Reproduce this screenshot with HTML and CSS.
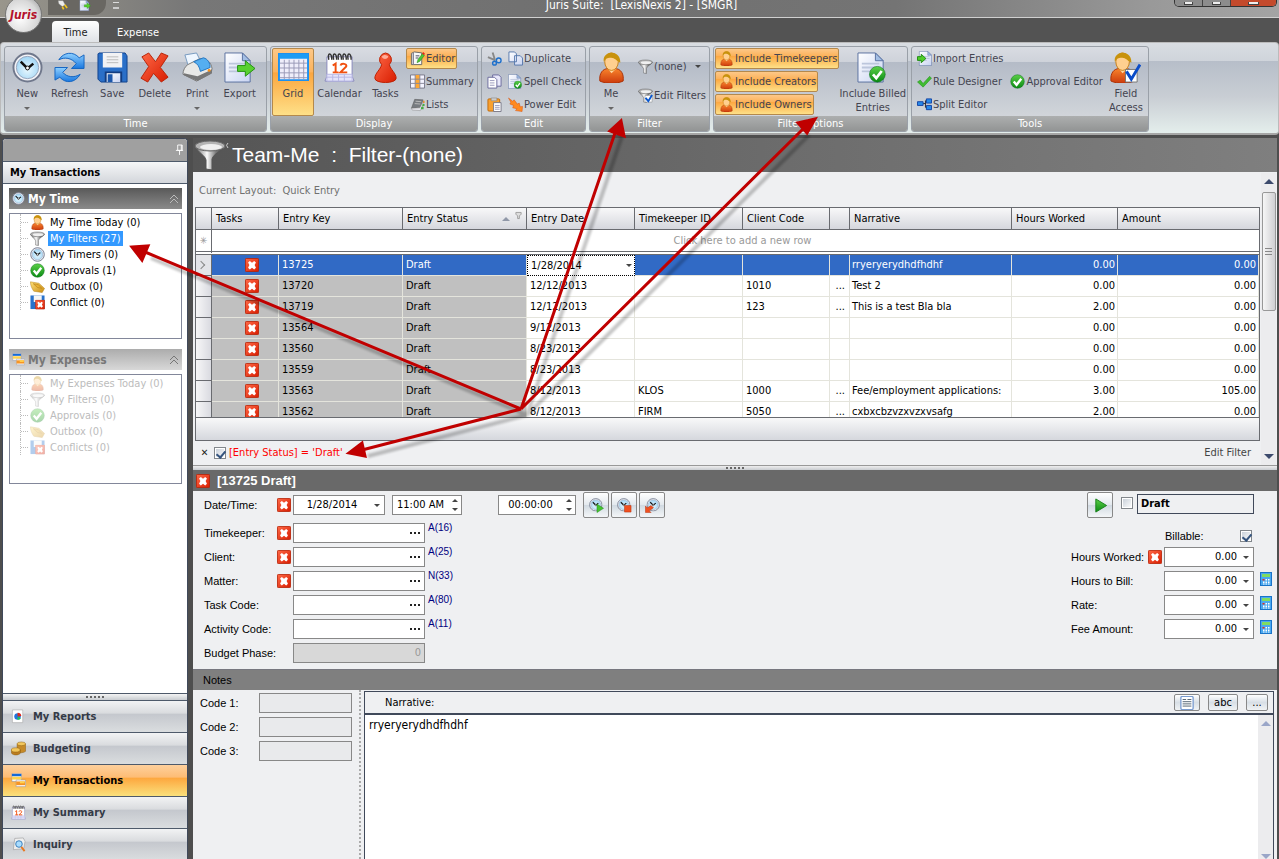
FILE: index.html
```html
<!DOCTYPE html>
<html lang="en">
<head>
<meta charset="utf-8">
<title>Juris Suite</title>
<link rel="stylesheet" href="styles.css">
</head>
<body>
<svg class="defs" aria-hidden="true">
<defs>
<linearGradient id="gOr" x1="0" y1="0" x2="0" y2="1"><stop offset="0" stop-color="#f8842c"/><stop offset="1" stop-color="#cc3a0c"/></linearGradient>
<linearGradient id="gRed" x1="0" y1="0" x2="1" y2="1"><stop offset="0" stop-color="#ff6a48"/><stop offset="1" stop-color="#d81c00"/></linearGradient>
<linearGradient id="gBlue" x1="0" y1="0" x2="0" y2="1"><stop offset="0" stop-color="#8fd0ff"/><stop offset="1" stop-color="#1a78e0"/></linearGradient>
<linearGradient id="gGreen" x1="0" y1="0" x2="0" y2="1"><stop offset="0" stop-color="#5cd048"/><stop offset="1" stop-color="#0a8a14"/></linearGradient>
<linearGradient id="gGold" x1="0" y1="0" x2="1" y2="1"><stop offset="0" stop-color="#ffe27a"/><stop offset="1" stop-color="#c98a10"/></linearGradient>
<linearGradient id="gMetal" x1="0" y1="0" x2="1" y2="0"><stop offset="0" stop-color="#666"/><stop offset=".4" stop-color="#fafafa"/><stop offset=".7" stop-color="#777"/><stop offset="1" stop-color="#333"/></linearGradient>
<linearGradient id="gDoc" x1="0" y1="0" x2="1" y2="1"><stop offset="0" stop-color="#fff"/><stop offset="1" stop-color="#c9d4f2"/></linearGradient>
<radialGradient id="gFace" cx=".5" cy=".6" r=".6"><stop offset="0" stop-color="#e8f8ff"/><stop offset="1" stop-color="#9ed4f4"/></radialGradient>
</defs>
<symbol id="clock" viewBox="0 0 32 32"><circle cx="16" cy="16" r="14.5" fill="#f4f4f8" stroke="#70788c" stroke-width="2"/><circle cx="16" cy="16" r="11.5" fill="url(#gFace)" stroke="#9aa6bc"/><path d="M9 10l7 7 6-5" fill="none" stroke="#111" stroke-width="2.6"/><circle cx="16" cy="16.5" r="2" fill="#fff" stroke="#111"/></symbol>
<symbol id="refresh" viewBox="0 0 32 32"><path d="M5 8C10 0 20-1 26 6l5-3v14H18l5-5C18 6 11 5 5 8z" fill="url(#gBlue)" stroke="#1464c0"/><path d="M27 23c-5 9-15 10-21 3l-5 3V16h13l-5 5c4 5 12 6 18 2z" fill="url(#gBlue)" stroke="#1464c0"/></symbol>
<symbol id="save" viewBox="0 0 32 32"><path d="M2 1h27l2 3v27H4l-3-3V2z" fill="#2a6fc8" stroke="#12428c"/><path d="M6 1h20v15H6z" fill="#f2f2f4"/><path d="M10 5h12M10 8h12M10 11h12" stroke="#bbb"/><path d="M8 20h18v11H8z" fill="#123c80"/><path d="M10 22h14v9H10z" fill="url(#gDoc)"/><path d="M11 23h5v8h-5z" fill="#1b57ac"/></symbol>
<symbol id="delete" viewBox="0 0 32 32"><path d="M3 5l7-4 7 9 6-9 7 3-8 12 8 10-7 5-8-9-6 9-7-4 8-12z" fill="url(#gRed)" stroke="#b82408"/></symbol>
<symbol id="print" viewBox="0 0 32 32"><path d="M3 3l12-2 5 10-13 5z" fill="#eef6ff" stroke="#779ac0"/><path d="M6 13l12-6c8-1 12 4 13 10l-1 5-15 8L1 23c0-4 2-8 5-10z" fill="#e8e8e6" stroke="#777"/><path d="M2 22l14 3 15-7v4l-15 8-14-6z" fill="#777"/><path d="M12 10l10-4c5 1 7 6 7 10l-10 4c-1-5-3-8-7-10z" fill="#55aef0" stroke="#2576c0"/><circle cx="28" cy="19" r="1.5" fill="#fc9012"/></symbol>
<symbol id="doc" viewBox="0 0 32 32"><path d="M3 1h18l8 8v22H3z" fill="url(#gDoc)" stroke="#5a72a0"/><path d="M21 1v8h8z" fill="#a3bee4" stroke="#5a72a0"/><path d="M7 12h18M7 16h18M7 20h12" stroke="#bcc6dc" stroke-width="2"/></symbol>
<symbol id="export" viewBox="0 0 32 32"><use href="#doc" x="-2"/><path d="M14 14h8V9l10 8-10 8v-5h-8z" fill="#58d030" stroke="#239012"/></symbol>
<symbol id="import" viewBox="0 0 32 32"><use href="#doc" x="2"/><path d="M1 12h8V7l10 9-10 9v-5H1z" fill="#50cc2a" stroke="#1d8a10" stroke-width="2"/></symbol>
<symbol id="grid" viewBox="0 0 32 32"><path d="M1 2h30v27H1z" fill="#efeefa" stroke="#1e90ee" stroke-width="2"/><path d="M1 2h30v5H1z" fill="#1e9cf4"/><path d="M2 11.500h28M2 16.500h28M2 21.500h28M2 26.500h28M6.500 8v20M11.500 8v20M16.500 8v20M21.500 8v20M26.500 8v20" stroke="#9a9ab8"/></symbol>
<symbol id="calendar" viewBox="0 0 32 32"><path d="M3 5h26v20l2 5H1l2-5z" fill="#fff" stroke="#8888bc"/><path d="M3 23h26v7H3zM9 23v7M15 23v7M21 23v7M3 26h26" fill="#e4e4fa" stroke="#b8b8e4"/><path d="M5 8c-2-8 3-8 3 0M10 8c-2-8 3-8 3 0M15 8c-2-8 3-8 3 0M20 8c-2-8 3-8 3 0M25 8c-2-8 3-8 3 0" fill="none" stroke="#333" stroke-width="1.500"/><path d="M9 14l3-2v9M9 21h6M17 14c1-3 7-2 6 1l-6 6h7" fill="none" stroke="#f05010" stroke-width="2"/></symbol>
<symbol id="pawn" viewBox="0 0 32 32"><path d="M16 1a7 7 0 014 12c1 5 7 9 7 14 0 6-22 6-22 0 0-5 6-9 7-14A7 7 0 0116 1z" fill="url(#gRed)" stroke="#bc2000"/><path d="M12 5c2-3 6-2 7 0-2 3-5 3-7 0z" fill="#ffac98"/></symbol>
<symbol id="person" viewBox="0 0 32 32"><path d="M4 30c-1-8 3-13 9-13h6c7 0 10 6 9 13-6 3-18 3-24 0z" fill="url(#gOr)" stroke="#aa3206"/><path d="M12 17l4 5 5-5v-3h-9z" fill="#ffd8a0"/><ellipse cx="16" cy="10" rx="7" ry="9" fill="#ffcf8f" stroke="#c88018"/><path d="M8 10C6-2 26-3 25 11 21 9 19 5 14 6c-2 0-4 1-6 4z" fill="#c8920c"/></symbol>
<symbol id="personCheck" viewBox="0 0 32 32"><use href="#person" x="-3"/><path d="M16 18h12v13H16z" fill="#fff" stroke="#777"/><path d="M17 20l5 8 9-15" fill="none" stroke="#0a4cc8" stroke-width="3"/></symbol>
<symbol id="ok" viewBox="0 0 32 32"><circle cx="16" cy="16" r="14.500" fill="url(#gGreen)" stroke="#077018"/><path d="M8 16l6 7 10-13" fill="none" stroke="#fff" stroke-width="5"/></symbol>
<symbol id="docOk" viewBox="0 0 32 32"><use href="#doc" x="-2"/><use href="#ok" x="12" y="14" width="18" height="18"/></symbol>
<symbol id="edit" viewBox="0 0 32 32"><path d="M3 5l6-3 16 2v25H3z" fill="#f8f8f8" stroke="#666" stroke-width="2"/><path d="M7 4v25M12 10h8M12 15h6" stroke="#889" stroke-width="3"/><path d="M15 25l2-7L27 5l4 4-10 13z" fill="#4cc634" stroke="#228018"/><path d="M26 5l2-3 4 4-3 3z" fill="#e82818"/></symbol>
<symbol id="plug" viewBox="0 0 32 32"><path d="M2 2h14l6 12-8 5L4 11z" fill="#eee" stroke="#999"/><path d="M14 19l4 8M21 14l7 9" stroke="#f2c41c" stroke-width="5"/></symbol>
<symbol id="summary" viewBox="0 0 32 32"><path d="M1 2h30v28H1z" fill="#f4f4ff" stroke="#778" stroke-width="2"/><path d="M11 2h10v28H11z" fill="#ffa834"/><path d="M1 11h30M1 20h30M11 2v28M21 2v28" stroke="#889" stroke-width="2"/></symbol>
<symbol id="lists" viewBox="0 0 32 32"><path d="M10 5l18 1-6 17-19 1z" fill="#777b80" stroke="#555"/><path d="M12 9l12 1M10 14l12 1" stroke="#bbb" stroke-width="2"/><path d="M3 24l18-1 7-13v8l-6 11-17-1z" fill="#e4e4ea" stroke="#888"/><path d="M28 8h3v5h-3z" fill="#e88a20"/><path d="M27 15h4v4h-5zM24 21h5v5h-6z" fill="#4a4"/></symbol>
<symbol id="cut" viewBox="0 0 32 32"><path d="M12 3l5 16M2 13l16 7" stroke="#888" stroke-width="4"/><circle cx="16" cy="26" r="4" fill="none" stroke="#1e70cc" stroke-width="3"/><circle cx="25" cy="20" r="5" fill="none" stroke="#1e70cc" stroke-width="3"/></symbol>
<symbol id="copy" viewBox="0 0 32 32"><path d="M12 2h13l5 5v19H12z" fill="#e8e8fa" stroke="#6a6a9c" stroke-width="2"/><path d="M2 7h14l5 5v18H2z" fill="#fff" stroke="#6a6a9c" stroke-width="2"/><path d="M6 14h10M6 19h10M6 24h10" stroke="#99b" stroke-width="2"/></symbol>
<symbol id="dup" viewBox="0 0 32 32"><path d="M2 2h12l4 4v17H2zM14 10h12l5 5v15H14z" fill="url(#gDoc)" stroke="#5678ac" stroke-width="2"/></symbol>
<symbol id="paste" viewBox="0 0 32 32"><rect x="2" y="4" width="25" height="26" rx="2" fill="#f8a030" stroke="#c06a08" stroke-width="2"/><path d="M9 2h12v6H9z" fill="#ccc" stroke="#777"/><path d="M14 12h16v19H14z" fill="#fff" stroke="#778" stroke-width="2"/><path d="M17 18h10M17 22h10M17 26h10" stroke="#99b" stroke-width="2"/></symbol>
<symbol id="bolt" viewBox="0 0 32 32"><path d="M1 2l9 7 3-3 7 9 4-2 2 8 5-1-1 11-14-2 3-4-9-2 2-5-8-3 2-4z" fill="#ff8a20" stroke="#d84a08"/></symbol>
<symbol id="funnel" viewBox="0 0 32 32"><path d="M1 7c3 7 10 9 11 14v9l6 1V20c2-6 9-7 13-13z" fill="url(#gMetal)" stroke="#555"/><ellipse cx="16" cy="7" rx="15" ry="5" fill="#b4b4b4" stroke="#666"/><ellipse cx="17" cy="8" rx="11" ry="3" fill="#f0f0f0"/></symbol>
<symbol id="funnelCheck" viewBox="0 0 32 32"><use href="#funnel"/><path d="M15 16h15v14H15z" fill="#fff" stroke="#888"/><path d="M16 21l6 7 8-13" fill="none" stroke="#0a58d0" stroke-width="4"/></symbol>
<symbol id="tick" viewBox="0 0 32 32"><path d="M1 17l6-4 6 7L27 5l4 4-18 19z" fill="#40bc30" stroke="#1c8a18"/></symbol>
<symbol id="split" viewBox="0 0 32 32"><path d="M12 14h6M18 8v14h4M18 8h4" fill="none" stroke="#222" stroke-width="2"/><path d="M1 10h12v8H1zM20 4h11v9H20zM20 18h11v9H20z" fill="#288ae8" stroke="#1242a4" stroke-width="2"/></symbol>
<symbol id="err" viewBox="0 0 32 32"><rect x="1" y="1" width="30" height="30" rx="2" fill="url(#gRed)" stroke="#b82408" stroke-width="2"/><path d="M7 10l4-3 5 4 5-4 4 3-3 6 3 6-4 4-5-4-5 4-4-4 3-6z" fill="#fff"/></symbol>
<symbol id="outbox" viewBox="0 0 32 32"><path d="M1 6l18 3 12 11-5 9-18-3C4 20 1 14 1 6z" fill="url(#gGold)" stroke="#b27c10"/><path d="M7 10l11 2 7 8-9-2z" fill="#e8b030" stroke="#a87010"/></symbol>
<symbol id="conflict" viewBox="0 0 32 32"><path d="M1 1h30v29H1z" fill="#2872cc"/><path d="M8 1h17v14H8z" fill="#f5f5f5"/><use href="#err" x="11" y="10" width="21" height="21"/></symbol>
<symbol id="trans" viewBox="0 0 32 32"><path d="M2 1h20v17H2z" fill="#fff" stroke="#889"/><path d="M2 2h20v5H2z" fill="#146ad8"/><path d="M2 8h20v6H2z" fill="#ffd34c"/><path d="M11 15h20v14H11z" fill="#fff" stroke="#889"/><path d="M11 18h19v8H11z" fill="#f69424"/><path d="M19 18h10v4H19z" fill="#ffd34c"/></symbol>
<symbol id="report" viewBox="0 0 32 32"><path d="M3 2h22v27H3z" fill="#fff" stroke="#999"/><circle cx="14" cy="16" r="7" fill="#2474dc"/><path d="M14 16V8a8 8 0 018 7z" fill="#e02818"/><path d="M14 16l7 4a8 8 0 01-7 3z" fill="#2c4"/></symbol>
<symbol id="coins" viewBox="0 0 32 32"><path d="M13 6v16c4 4 14 4 18 0V6z" fill="#c68a28" stroke="#8a5a0c"/><ellipse cx="22" cy="6" rx="9" ry="4" fill="#f2c65c" stroke="#8a5a0c"/><path d="M1 19v7c4 5 15 5 19 0v-7z" fill="#bb7d20" stroke="#8a5a0c"/><ellipse cx="10" cy="19" rx="9.500" ry="4.500" fill="#f2c65c" stroke="#8a5a0c"/></symbol>
<symbol id="search" viewBox="0 0 32 32"><path d="M8 3l18-1 4 7-3 16-22 2z" fill="#eee" stroke="#888"/><circle cx="17" cy="15" r="7" fill="#a8dcff" stroke="#347ab8" stroke-width="2"/><path d="M22 21l7 9" stroke="#e87820" stroke-width="4"/></symbol>
<symbol id="calc" viewBox="0 0 24 28"><rect x="1" y="1" width="22" height="26" fill="#4aa8f0" stroke="#1a74c8" stroke-width="2"/><path d="M4 4h16v6H4z" fill="#80dc60"/><path d="M5 14h4v3H5z" fill="#e03020"/><path d="M11 14h3v3h-3zM16 14h3v3h-3zM6 19h3v3H6zM11 19h3v3h-3zM16 19h3v3h-3zM6 23h3v2H6zM11 23h3v2h-3zM16 23h3v2h-3z" fill="#fff"/></symbol>
<symbol id="play" viewBox="0 0 32 32"><path d="M6 2l23 14L6 30z" fill="url(#gGreen)" stroke="#16801a" stroke-width="2"/></symbol>
<symbol id="clockPlay" viewBox="0 0 32 32"><use href="#clock" width="29" height="29"/><path d="M17 13l14 9-14 9z" fill="#44c430" stroke="#1c8816"/></symbol>
<symbol id="clockStop" viewBox="0 0 32 32"><use href="#clock" width="29" height="29"/><path d="M16 16h14v14H16z" fill="#f05020" stroke="#b42c08"/></symbol>
<symbol id="clockBack" viewBox="0 0 32 32"><use href="#clock" x="3" width="29" height="29"/><path d="M1 31V17l4 4 8-5 5 5-9 6 4 4z" fill="#f05020" stroke="#b42c08"/></symbol>
<symbol id="note" viewBox="0 0 32 32"><rect x="2" y="1" width="28" height="30" rx="3" fill="#fff" stroke="#7a9cd0" stroke-width="3"/><path d="M6 8h8M6 13h20M6 18h20M6 23h20M17 8h9" stroke="#456" stroke-width="2"/></symbol>
<symbol id="chev" viewBox="0 0 10 10"><path d="M1 5l4-4 4 4M1 9l4-4 4 4" fill="none" stroke="currentColor"/></symbol>
<symbol id="pin" viewBox="0 0 10 12"><path d="M3 1h5v6H3zM1 7h8M5 7v5M7 1v6" fill="none" stroke="#fff"/></symbol>
</svg>

<div class="app">
<header class="titlebar">
  <div class="quick"><svg class="i14"><use href="#plug"/></svg><svg class="i14"><use href="#export"/></svg></div>
  <span class="quick-more"></span>
  <h1>Juris Suite:&nbsp; [LexisNexis 2] - [SMGR]</h1>
  <div class="winbtns"><button aria-label="Minimize"><i></i></button><button aria-label="Restore"><i></i></button><button class="close" aria-label="Close"><i></i></button></div>
</header>
<nav class="tabs"><button class="tab on">Time</button><button class="tab">Expense</button></nav>
<button class="orb">Juris</button>

<section class="ribbon">
  <div class="group g-time"><div class="tools even">
    <button class="big"><svg><use href="#clock"/></svg>New<b class="dn"></b></button>
    <button class="big"><svg><use href="#refresh"/></svg>Refresh</button>
    <button class="big"><svg><use href="#save"/></svg>Save</button>
    <button class="big"><svg><use href="#delete"/></svg>Delete</button>
    <button class="big"><svg><use href="#print"/></svg>Print<b class="dn"></b></button>
    <button class="big"><svg><use href="#export"/></svg>Export</button>
  </div><h2>Time</h2></div>
  <div class="group g-display"><div class="tools">
    <button class="big hot w-grid"><svg><use href="#grid"/></svg>Grid</button>
    <button class="big w-cal"><svg><use href="#calendar"/></svg>Calendar</button>
    <button class="big w-tasks"><svg><use href="#pawn"/></svg>Tasks</button>
    <div class="stack"><button class="small hot"><svg><use href="#edit"/></svg>Editor</button><button class="small"><svg><use href="#summary"/></svg>Summary</button><button class="small"><svg><use href="#lists"/></svg>Lists</button></div>
  </div><h2>Display</h2></div>
  <div class="group g-edit"><div class="tools">
    <div class="stack"><button class="small" aria-label="Cut"><svg><use href="#cut"/></svg></button><button class="small" aria-label="Copy"><svg><use href="#copy"/></svg></button><button class="small" aria-label="Paste"><svg><use href="#paste"/></svg></button></div>
    <div class="stack"><button class="small"><svg><use href="#dup"/></svg>Duplicate</button><button class="small"><svg><use href="#docOk"/></svg>Spell Check</button><button class="small"><svg><use href="#bolt"/></svg>Power Edit</button></div>
  </div><h2>Edit</h2></div>
  <div class="group g-filter"><div class="tools">
    <button class="big w-grid"><svg><use href="#person"/></svg>Me<b class="dn"></b></button>
    <div class="stack two"><button class="small"><svg><use href="#funnel"/></svg>(none)<b class="dn after"></b></button><button class="small"><svg><use href="#funnelCheck"/></svg>Edit Filters</button></div>
  </div><h2>Filter</h2></div>
  <div class="group g-opt"><div class="tools">
    <div class="stack"><button class="small hot"><svg><use href="#person"/></svg>Include Timekeepers</button><button class="small hot"><svg><use href="#person"/></svg>Include Creators</button><button class="small hot"><svg><use href="#person"/></svg>Include Owners</button></div>
    <button class="big fill"><svg><use href="#docOk"/></svg>Include Billed<br>Entries</button>
  </div><h2>Filter Options</h2></div>
  <div class="group g-tools"><div class="tools">
    <div class="stack"><button class="small"><svg><use href="#import"/></svg>Import Entries</button><button class="small"><svg><use href="#tick"/></svg>Rule Designer</button><button class="small"><svg><use href="#split"/></svg>Split Editor</button></div>
    <div class="stack mid"><button class="small"><svg><use href="#ok"/></svg>Approval Editor</button></div>
    <button class="big fill"><svg><use href="#personCheck"/></svg>Field<br>Access</button>
  </div><h2>Tools</h2></div>
</section>

<div class="body">
<aside class="side">
  <div class="pinbar"><svg><use href="#pin"/></svg></div>
  <h2 class="side-title">My Transactions</h2>
  <div class="side-main">
    <section><h3 class="bar"><svg><use href="#clock"/></svg>My Time<svg class="chev"><use href="#chev"/></svg></h3>
    <ul class="tree">
      <li><svg><use href="#person"/></svg><span>My Time Today (0)</span></li>
      <li><svg><use href="#funnel"/></svg><span class="sel">My Filters (27)</span></li>
      <li><svg><use href="#clock"/></svg><span>My Timers (0)</span></li>
      <li><svg><use href="#ok"/></svg><span>Approvals (1)</span></li>
      <li><svg><use href="#outbox"/></svg><span>Outbox (0)</span></li>
      <li><svg><use href="#conflict"/></svg><span>Conflict (0)</span></li>
    </ul></section>
    <section><h3 class="bar light"><svg><use href="#trans"/></svg>My Expenses<svg class="chev"><use href="#chev"/></svg></h3>
    <ul class="tree short">
      <li><svg><use href="#person"/></svg><span>My Expenses Today (0)</span></li>
      <li><svg><use href="#funnel"/></svg><span>My Filters (0)</span></li>
      <li><svg><use href="#ok"/></svg><span>Approvals (0)</span></li>
      <li><svg><use href="#outbox"/></svg><span>Outbox (0)</span></li>
      <li><svg><use href="#conflict"/></svg><span>Conflicts (0)</span></li>
    </ul></section>
  </div>
  <div class="grip"></div>
  <nav class="nav">
    <button><svg><use href="#report"/></svg>My Reports</button>
    <button><svg><use href="#coins"/></svg>Budgeting</button>
    <button class="on"><svg><use href="#trans"/></svg>My Transactions</button>
    <button><svg><use href="#calendar"/></svg>My Summary</button>
    <button><svg><use href="#search"/></svg>Inquiry</button>
  </nav>
</aside>

<main class="main">
  <h2 class="head"><svg viewBox="0 0 35 34"><use href="#funnel" width="32" height="34"/><path d="M34 5q-3 2 0 5" fill="none" stroke="#ccc"/></svg>Team-Me&nbsp; :&nbsp; Filter-(none)</h2>
  <div class="upper">
    <div class="gridcol">
      <p class="layout">Current Layout:&nbsp; Quick Entry</p>
      <div class="gridbox">
      <table>
        <colgroup><col class="c0"><col class="c1"><col class="c2"><col class="c2"><col class="c3"><col class="c3"><col class="c4"><col class="c5"><col class="c6"><col class="c7"><col></colgroup>
        <thead>
        <tr><th></th><th>Tasks</th><th>Entry Key</th><th><span class="sorted">Entry Status<span class="marks"><b class="up"></b><svg viewBox="0 0 8 9"><path d="M1 1h6v2L5 5v3H3V5L1 3z" fill="#ddd" stroke="#999"/></svg></span></span></th><th>Entry Date</th><th>Timekeeper ID</th><th>Client Code</th><th></th><th>Narrative</th><th>Hours Worked</th><th>Amount</th></tr>
        <tr class="newrow"><td class="ind">✳</td><td colspan="10">Click here to add a new row</td></tr>
        </thead>
        <tbody>
        <tr class="cur"><td class="ind"><i class="gt"></i></td><td><svg><use href="#err"/></svg></td><td>13725</td><td>Draft</td><td class="focus"><span class="sorted">1/28/2014<b class="dn"></b></span></td><td></td><td></td><td></td><td>rryeryerydhdfhdhf</td><td>0.00</td><td>0.00</td></tr>
        <tr><td class="ind"></td><td><svg><use href="#err"/></svg></td><td>13720</td><td>Draft</td><td>12/12/2013</td><td></td><td>1010</td><td>...</td><td>Test 2</td><td>0.00</td><td>0.00</td></tr>
        <tr><td class="ind"></td><td><svg><use href="#err"/></svg></td><td>13719</td><td>Draft</td><td>12/12/2013</td><td></td><td>123</td><td>...</td><td>This is a test Bla bla</td><td>2.00</td><td>0.00</td></tr>
        <tr><td class="ind"></td><td><svg><use href="#err"/></svg></td><td>13564</td><td>Draft</td><td>9/12/2013</td><td></td><td></td><td></td><td></td><td>0.00</td><td>0.00</td></tr>
        <tr><td class="ind"></td><td><svg><use href="#err"/></svg></td><td>13560</td><td>Draft</td><td>8/23/2013</td><td></td><td></td><td></td><td></td><td>0.00</td><td>0.00</td></tr>
        <tr><td class="ind"></td><td><svg><use href="#err"/></svg></td><td>13559</td><td>Draft</td><td>8/23/2013</td><td></td><td></td><td></td><td></td><td>0.00</td><td>0.00</td></tr>
        <tr><td class="ind"></td><td><svg><use href="#err"/></svg></td><td>13563</td><td>Draft</td><td>8/12/2013</td><td>KLOS</td><td>1000</td><td>...</td><td>Fee/employment applications:</td><td>3.00</td><td>105.00</td></tr>
        <tr><td class="ind"></td><td><svg><use href="#err"/></svg></td><td>13562</td><td>Draft</td><td>8/12/2013</td><td>FIRM</td><td>5050</td><td>...</td><td>cxbxcbzvzxvzxvsafg</td><td>2.00</td><td>0.00</td></tr>
        </tbody>
      </table>
      </div>
      <div class="gridfoot"></div>
      <div class="filterbar"><button class="x" aria-label="Clear filter">✕</button><input type="checkbox" id="flt" checked><label for="flt">[Entry Status] = 'Draft'</label><button class="editf">Edit Filter</button></div>
    </div>
    <div class="scroll"><b class="up"></b><i class="thumb"></i><b class="dn"></b></div>
  </div>
  <div class="split"></div>
  <h2 class="rec"><svg><use href="#err"/></svg>[13725 Draft]</h2>
  <form class="form">
    <div class="left">
      <div class="row first"><label for="d">Date/Time:</label><svg><use href="#err"/></svg><span class="fld w92"><input id="d" value="1/28/2014"><button type="button" class="drop" aria-label="Pick date"><b class="dn"></b></button></span><span class="fld w70"><input aria-label="Time" value="11:00 AM"><button type="button" class="spin" aria-label="Change time"><b class="up"></b><b class="dn"></b></button></span><span class="fld w78"><input aria-label="Timer" value="00:00:00"><button type="button" class="spin" aria-label="Change timer"><b class="up"></b><b class="dn"></b></button></span><span class="timers"><button type="button" class="sq" aria-label="Start"><svg><use href="#clockPlay"/></svg></button><button type="button" class="sq" aria-label="Stop"><svg><use href="#clockStop"/></svg></button><button type="button" class="sq" aria-label="Reset"><svg><use href="#clockBack"/></svg></button></span></div>
      <div class="row"><label for="tk">Timekeeper:</label><svg><use href="#err"/></svg><span class="fld w132"><input id="tk"><button type="button" class="dots" aria-label="Find timekeeper"></button></span><small>A(16)</small></div>
      <div class="row"><label for="cl">Client:</label><svg><use href="#err"/></svg><span class="fld w132"><input id="cl"><button type="button" class="dots" aria-label="Find client"></button></span><small>A(25)</small></div>
      <div class="row"><label for="mt">Matter:</label><svg><use href="#err"/></svg><span class="fld w132"><input id="mt"><button type="button" class="dots" aria-label="Find matter"></button></span><small>N(33)</small></div>
      <div class="row"><label for="tc">Task Code:</label><svg></svg><span class="fld w132"><input id="tc"><button type="button" class="dots" aria-label="Find task code"></button></span><small>A(80)</small></div>
      <div class="row"><label for="ac">Activity Code:</label><svg></svg><span class="fld w132"><input id="ac"><button type="button" class="dots" aria-label="Find activity code"></button></span><small>A(11)</small></div>
      <div class="row"><label for="bp">Budget Phase:</label><svg></svg><span class="fld w132 off"><input id="bp" value="0" disabled></span></div>
    </div>
    <div class="right">
      <div class="rrow status"><button type="button" class="sq" aria-label="Run"><svg><use href="#play"/></svg></button><input type="checkbox" id="st"><label for="st" class="draft">Draft</label></div>
      <div class="rrow bill"><label for="bi">Billable:</label><input type="checkbox" id="bi" checked></div>
      <div class="rrow"><label for="hw">Hours Worked:</label><svg><use href="#err"/></svg><span class="fld w90"><input id="hw" value="0.00"><button type="button" class="drop" aria-label="Hours worked calculator"><b class="dn"></b></button></span></div>
      <div class="rrow"><label for="hb">Hours to Bill:</label><svg></svg><span class="fld w90"><input id="hb" value="0.00"><button type="button" class="drop" aria-label="Hours to bill calculator"><b class="dn"></b></button></span><svg class="calc"><use href="#calc"/></svg></div>
      <div class="rrow"><label for="ra">Rate:</label><svg></svg><span class="fld w90"><input id="ra" value="0.00"><button type="button" class="drop" aria-label="Rate calculator"><b class="dn"></b></button></span><svg class="calc"><use href="#calc"/></svg></div>
      <div class="rrow"><label for="fa">Fee Amount:</label><svg></svg><span class="fld w90"><input id="fa" value="0.00"><button type="button" class="drop" aria-label="Fee calculator"><b class="dn"></b></button></span><svg class="calc"><use href="#calc"/></svg></div>
    </div>
  </form>
  <h2 class="noteshead">Notes</h2>
  <div class="notes">
    <div class="codes">
      <div><label for="c1">Code 1:</label><input id="c1" disabled></div>
      <div><label for="c2">Code 2:</label><input id="c2" disabled></div>
      <div><label for="c3">Code 3:</label><input id="c3" disabled></div>
    </div>
    <div class="narr">
      <div class="narrbar"><label for="nr">Narrative:</label><button class="mini" aria-label="Templates"><svg><use href="#note"/></svg></button><button class="mini">abc</button><button class="mini last">...</button></div>
      <div class="narrbody"><textarea id="nr">rryeryerydhdfhdhf</textarea><div class="scroll faint"><b class="up"></b><b class="dn"></b></div></div>
    </div>
  </div>
</main>
</div>

<svg class="arrows" aria-hidden="true">
  <g class="shadow" transform="translate(6 6)"><path d="M521 409L616 130M521 409L803 129M521 409L145 252M521 409L362 450"/></g>
  <g class="line"><path d="M521 409L616 130M521 409L803 129M521 409L145 252M521 409L362 450"/></g>
  <g class="tip"><path d="M621 121l3 15-14-5zM815 119l-8 14-9-10zM132 247l16-1-6 14zM349 453l13-10 3 13z"/></g>
</svg>
</div>
</body>
</html>
```
FILE: styles.css
```css
* { box-sizing: border-box; margin: 0; padding: 0; }
body { background: #4e4e4e; font: 11px/14px "DejaVu Sans Condensed", "DejaVu Sans", sans-serif; color: #000; overflow: hidden; }
button { font: inherit; color: inherit; background: none; border: 0; }
input, textarea { font: inherit; color: #000; }
h1, h2, h3 { font: inherit; }
ul { list-style: none; }
svg { display: block; flex: none; }
.defs { position: absolute; width: 0; height: 0; }
.app { position: relative; display: flex; flex-direction: column; height: 100vh; }
.dn, .up { display: inline-block; flex: none; border: 3px solid transparent; }
.dn { border-top-color: #444; border-bottom: 0; }
.up { border-bottom-color: #444; border-top: 0; }

.titlebar { height: 18px; flex: none; display: flex; align-items: flex-start; background: linear-gradient(90deg, #99968c, #777 15%, #707070 45%, #747474 70%, #999 90%, #a4a4a4); border-bottom: 1px solid #d0d0d0; }
.quick { display: flex; gap: 8px; margin-left: 48px; padding: 0 14px 0 8px; width: 58px; height: 15px; background: #696762; border-radius: 0 0 12px 0; }
.i14 { width: 14px; height: 11px; }
.quick-more { width: 6px; height: 7px; margin: 2px 0 0 7px; border-top: 1px solid #ddd; border-bottom: 2px solid #ccc; }
.titlebar h1 { flex: 1; text-align: center; color: #fff; font-size: 12px; line-height: 10px; padding-right: 10px; }
.winbtns { display: flex; width: 103px; height: 7px; margin-right: 2px; border: 1px solid #333; border-top: 0; border-radius: 0 0 5px 5px; overflow: hidden; }
.winbtns button { width: 28px; background: #8c8c8c; border-right: 1px solid #444; padding: 0 9px; }
.winbtns i { display: block; height: 3px; background: #eee; border: 1px solid #444; border-top: 0; }
.winbtns .close { flex: 1; border: 0; background: #c44a2c; padding: 0 17px; }
.tabs { display: flex; height: 24px; flex: none; background: #535353; padding: 3px 0 0 52px; }
.tab { width: 47px; color: #fff; padding-top: 2px; }
.tab + .tab { width: 78px; }
.tab.on { color: #222; background: linear-gradient(#fff, #dfe2e6); border-radius: 4px 4px 0 0; }
.orb { position: absolute; left: 5px; top: -4px; width: 37px; height: 37px; border-radius: 50%; background: radial-gradient(circle at 40% 60%, #fff, #d8d8d8 60%, #888); border: 1px solid #777; color: #b4122c; font: italic bold 12px/34px "DejaVu Sans Condensed", sans-serif; }

.ribbon { display: flex; gap: 3px; height: 93px; flex: none; padding: 3px 3px 1px; color: #444450; border: 1px solid #bbb; border-bottom: 2px solid #a6a6a6; border-radius: 4px; background: linear-gradient(#d9dde2, #cfd4db 20%, #b7bec9 20%, #c9ced4 60%, #e4eeec); }
.group { display: flex; flex-direction: column; border: 1px solid #9aa0a8; border-radius: 3px; overflow: hidden; background: linear-gradient(#d9dce2, #ced2da 18%, #b4bbc7 18%, #d9dcdf); }
.group h2 { height: 15px; flex: none; line-height: 15px; text-align: center; color: #fff; background: linear-gradient(#adafaf, #929494); }
.g-time { width: 263px; } .g-display { width: 208px; } .g-edit { width: 105px; } .g-filter { width: 121px; } .g-opt { width: 195px; } .g-tools { width: 238px; }
.tools { display: flex; flex: 1; padding: 1px 1px 0; min-height: 0; }
.even { padding-right: 5px; }
.even .big { flex: 1; }
.big { display: flex; flex-direction: column; align-items: center; padding-top: 3px; border: 1px solid transparent; }
.big svg { width: 31px; height: 31px; margin-bottom: 4px; }
.big .dn { border-top-color: #666; margin-top: 6px; }
.after { margin-left: 7px; }
.w-grid { width: 42px; } .w-cal { width: 51px; } .w-tasks { width: 41px; }
.fill { flex: 1; min-width: 0; white-space: nowrap; }
.stack { display: flex; flex-direction: column; align-items: flex-start; gap: 2px; }
.two { gap: 8px; padding: 8px 0 0 3px; }
.mid { padding: 23px 0 0 1px; }
.small { display: flex; align-items: center; gap: 1px; height: 21px; flex: none; padding: 0 1px 0 3px; border: 1px solid transparent; border-radius: 2px; white-space: nowrap; }
.small svg { width: 15px; height: 15px; }
.hot { border-color: #b4894c; background: linear-gradient(#fdc888, #fcb35c 35%, #fca63f 36%, #fee088); border-radius: 2px; }

.body { display: flex; flex: 1; min-height: 0; padding-top: 3px; gap: 5px; }
.side { display: flex; flex-direction: column; width: 186px; flex: none; margin-left: 2px; border: 1px solid #40495a; border-bottom: 0; border-radius: 4px 4px 0 0; background: #fff; overflow: hidden; }
.pinbar { height: 22px; flex: none; background: #a0a0a0; display: flex; justify-content: flex-end; padding: 5px 3px; }
.pinbar svg { width: 9px; height: 11px; }
.side-title { height: 23px; flex: none; padding-left: 7px; font-weight: bold; line-height: 21px; border: solid #4e5a6a; border-width: 1px 0; background: linear-gradient(#f6f7f8, #d3d6db); }
.side-main { flex: 1; min-height: 0; padding: 4px 5px 0 6px; display: flex; flex-direction: column; gap: 10px; overflow: hidden; }
.bar { display: flex; align-items: center; gap: 3px; height: 21px; padding: 0 3px; color: #fff; font-weight: bold; background: linear-gradient(#595959, #8a8a8a); font-size: 12px; }
.bar svg { width: 13px; height: 13px; }
.bar .chev { width: 10px; height: 10px; margin-left: auto; color: #bbb; }
.bar.light { color: #777; background: linear-gradient(#acacac, #d8d8d8); }
.bar.light .chev { color: #777; }
.tree { margin-top: 4px; height: 126px; border: 1px solid #82879a; padding-left: 10px; }
.tree.short { height: 110px; color: #bcbcbc; }
.tree.short svg { opacity: .35; }
.tree li { display: flex; align-items: center; height: 16px; border-left: 1px dotted #bbb; }
.tree li::before { content: ""; width: 7px; margin-right: 2px; border-top: 1px dotted #bbb; }
.tree li svg { width: 15px; height: 15px; margin-right: 3px; }
.tree li span { padding: 0 2px; line-height: 15px; white-space: nowrap; }
.tree li .sel { color: #fff; background: #3399ff; }
.grip { height: 8px; flex: none; border: solid #4e5a6a; border-width: 1px 0; background: linear-gradient(#f4f4f4, #c8ccd0); }
.grip::after, .split::after { content: ""; display: block; width: 18px; height: 2px; margin: 2px auto 0; background: repeating-linear-gradient(90deg, #666 0 2px, transparent 2px 4px); }
.nav { flex: none; margin-bottom: -2px; }
.nav button { display: flex; align-items: center; gap: 7px; width: 100%; height: 32px; padding: 0 0 0 8px; font-weight: bold; color: #343a46; border-bottom: 1px solid #4e5a6a; background: linear-gradient(#f2f3f4, #d9dbde 40%, #c4c7cd 41%, #dadddf); }
.nav button svg { width: 15px; height: 15px; }
.nav .on { color: #000; background: linear-gradient(#fed09c, #fdbc74 40%, #fda63d 41%, #fae07c); }

.main { display: flex; flex-direction: column; flex: 1; min-width: 0; margin-right: 2px; background: #eff0f2; }
.head { display: flex; align-items: center; gap: 3px; height: 34px; flex: none; padding-left: 1px; color: #fff; font: 21px/34px "Liberation Sans", sans-serif; background: linear-gradient(90deg, #555, #7f7f7f); white-space: pre; }
.head svg { width: 35px; height: 34px; }
.upper { display: flex; padding: 1px 1px 0 2px; flex: none; border-bottom: 1px solid #999; }
.gridcol { flex: 1; min-width: 0; }
.layout { height: 34px; line-height: 36px; padding-left: 4px; color: #707070; }
.gridbox { height: 210px; overflow: hidden; border: 1px solid #696b70; border-bottom: 0; }
table { width: 100%; table-layout: fixed; border-collapse: separate; border-spacing: 0; }
.c0 { width: 16px; } .c1 { width: 67px; } .c2 { width: 124px; } .c3 { width: 108px; } .c4 { width: 87px; } .c5 { width: 20px; } .c6 { width: 162px; } .c7 { width: 106px; }
th { height: 22px; text-align: left; font-weight: normal; padding: 0 4px; border: solid #696b70; border-width: 0 1px 1px 0; background: linear-gradient(#f8f8f9, #d5d7dd); white-space: nowrap; }
th:last-child { border-right: 0; }
.sorted { display: flex; align-items: center; justify-content: space-between; }
.marks { display: flex; align-items: center; gap: 5px; }
.marks .up { border: 4px solid transparent; border-top: 0; border-bottom: 4px solid #9098a8; }
.marks svg { width: 7px; height: 9px; margin-bottom: 6px; }
td { height: 21px; padding: 0 2px; background: #fff; border: solid #e4e4dc; border-width: 0 1px 1px 0; white-space: nowrap; overflow: hidden; }
td svg { width: 14px; height: 14px; margin: auto; }
td:nth-child(-n+4) { background: #c0c0c0; }
td:nth-child(2) { padding-left: 16px; }
td:nth-child(n+10) { text-align: right; }
td:nth-child(n+3):nth-child(-n+7) { padding-left: 3px; }
td:nth-child(8) { text-align: right; padding-right: 4px; }
tr td.ind { background: linear-gradient(90deg, #f7f7f8, #d9dae0); border-color: #696b70; color: #999; text-align: center; padding: 0; }
.newrow td { height: 25px; text-align: center; color: #999; background: #fff !important; border-bottom: 4px double #696b70; border-right: 0; }
.newrow td.ind { border-right: 1px solid #696b70; font-size: 10px; }
.cur td { background: #316ac5 !important; color: #fff; }
.cur td.ind { background: #e3e4e8 !important; }
.cur td.focus { background: #fff !important; color: #000; border: 1px dotted #000; }
.gt { display: block; width: 6px; height: 6px; margin-left: 2px; border: solid #888; border-width: 1px 1px 0 0; transform: rotate(45deg); }
.gridfoot { height: 24px; border: 1px solid #696b70; background: linear-gradient(#f8f8f9, #d5d7dd); }
.filterbar { display: flex; align-items: center; height: 24px; padding: 0 9px 0 4px; color: #f00; }
.filterbar .x { width: 11px; color: #222; font-size: 10px; margin-right: 4px; }
.filterbar label { padding-left: 3px; }
.editf { margin-left: auto; color: #444; }
input[type=checkbox] { appearance: none; width: 12px; height: 12px; flex: none; border: 1px solid #82878c; background: linear-gradient(135deg, #c4ccd6, #fff); box-shadow: inset 0 0 0 1px #fff; }
input[type=checkbox]:checked::after { content: ""; display: block; width: 4px; height: 7px; margin: 1px 0 0 3px; border: solid #35547e; border-width: 0 2px 2px 0; transform: rotate(40deg); }
.scroll { display: flex; flex-direction: column; align-items: center; width: 15px; margin-left: 1px; padding: 6px 0; background: #ececee; }
.scroll .up { border: 5px solid transparent; border-top: 0; border-bottom: 5px solid #3c4a6c; }
.scroll > .dn { border: 5px solid transparent; border-bottom: 0; border-top: 5px solid #3c4a6c; margin-top: auto; }
.thumb { width: 14px; height: 119px; margin-top: 8px; border: 1px solid #989898; border-radius: 2px; background: repeating-linear-gradient(#888 0 1px, transparent 1px 3px) center / 7px 8px no-repeat, linear-gradient(90deg, #f6f6f6, #cfcfd2); }
.split { height: 4px; flex: none; background: linear-gradient(#eee, #c8ccd0); overflow: hidden; }
.split::after { margin-top: 1px; }
.rec { display: flex; align-items: center; gap: 7px; height: 21px; flex: none; padding-left: 3px; color: #fff; font: bold 13px/20px "Liberation Sans", sans-serif; background: #696969; }
.rec svg { width: 14px; height: 14px; }

.form { display: flex; justify-content: space-between; flex: none; height: 178px; }
.left { padding-left: 11px; }
.row, .rrow { display: flex; align-items: center; height: 24px; }
.row label, .rrow label, .codes label { font: 11px/14px "Liberation Sans", sans-serif; }
.row label { width: 73px; }
.row.first { height: 28px; margin-bottom: 2px; }
.row > svg, .rrow > svg { width: 14px; height: 14px; margin-right: 2px; }
.fld { display: flex; align-items: center; height: 20px; border: 1px solid #888; background: #fff; }
.fld input { flex: 1; min-width: 0; width: 0; border: 0; background: none; text-align: center; }
.w92 { width: 92px; margin-right: 7px; } .w70 { width: 70px; margin-right: 36px; } .w78 { width: 78px; margin-right: 7px; } .w132 { width: 132px; } .w90 { width: 90px; }
.drop, .spin, .dots { display: flex; align-items: center; justify-content: center; flex: none; width: 14px; height: 18px; }
.spin { flex-direction: column; gap: 6px; width: 13px; }
.dots { width: 18px; }
.dots::before { content: ""; width: 10px; height: 2px; background: repeating-linear-gradient(90deg, #222 0 2px, transparent 2px 4px); }
.off { background: #d8d8d8; }
.off input { text-align: right; padding-right: 3px; color: #999; }
.row small { align-self: flex-start; padding-left: 3px; color: #000080; font: 10px/14px "Liberation Sans", sans-serif; }
.timers { display: flex; gap: 2px; }
.sq { display: flex; align-items: center; justify-content: center; width: 26px; height: 26px; border: 1px solid #888; border-radius: 2px; background: linear-gradient(#fff, #e4e9ee 48%, #d0d9e1 50%, #f4f6f8); }
.sq svg { width: 15px; height: 15px; }
.right { width: 206px; }
.rrow label { width: 77px; white-space: nowrap; }
.status { height: 28px; padding-left: 16px; }
.status input { margin: 0 4px 4px 8px; }
.rrow .draft { width: 117px; height: 20px; margin-bottom: 2px; padding-left: 3px; font: bold 11px/18px "DejaVu Sans Condensed", sans-serif; border: 1px solid #40495a; }
.bill { height: 26px; padding: 8px 0 0 94px; }
.rrow.bill label { width: 75px; }
.w90 input { text-align: right; padding-right: 2px; }
.rrow svg.calc { width: 12px; height: 14px; margin: 0 0 4px 6px; }

.noteshead { height: 21px; flex: none; padding-left: 10px; font: 11px/20px "Liberation Sans", sans-serif; background: #7f7f7f; border-top: 1px solid #77777f; }
.notes { display: flex; flex: 1; min-height: 0; }
.codes { width: 168px; padding: 1px 7px 0; border-right: 2px dotted #aaa; }
.codes div { display: flex; align-items: center; height: 24px; }
.codes label { width: 61px; }
.codes input { width: 93px; height: 20px; border: 1px solid #888; background: #e9eaec; }
.narr { flex: 1; display: flex; flex-direction: column; margin: 1px 3px 0 3px; border: solid #40495a; border-width: 1px 1px 0 1px; }
.narrbar { display: flex; align-items: center; gap: 8px; height: 23px; padding: 0 5px 0 20px; border-bottom: 2px solid #40495a; }
.narrbar label { flex: 1; }
.mini { display: flex; align-items: center; justify-content: center; min-width: 26px; height: 17px; border: 1px solid #888; border-radius: 2px; background: linear-gradient(#fff, #d8dfe6 50%, #f0f2f4); }
.mini + .mini { min-width: 30px; }
.mini + .last { min-width: 22px; }
.mini svg { width: 14px; height: 14px; }
.narrbody { display: flex; flex: 1; background: #fff; }
.narrbody textarea { flex: 1; resize: none; border: 0; padding: 3px 4px; font-size: 12px; line-height: 14px; }
.faint { padding-bottom: 0; }
.faint .up { border-bottom-color: #9aa6c8; }
.faint > .dn { border-top-color: #9aa6c8; }
.arrows { position: absolute; inset: 0; width: 100%; height: 100%; pointer-events: none; }
.shadow { stroke: #000; opacity: .22; stroke-width: 4; fill: none; filter: blur(1px); }
.line { stroke: #c00000; stroke-width: 3; fill: none; }
.tip { fill: #c00000; stroke: #c00000; stroke-width: 3; }
```
